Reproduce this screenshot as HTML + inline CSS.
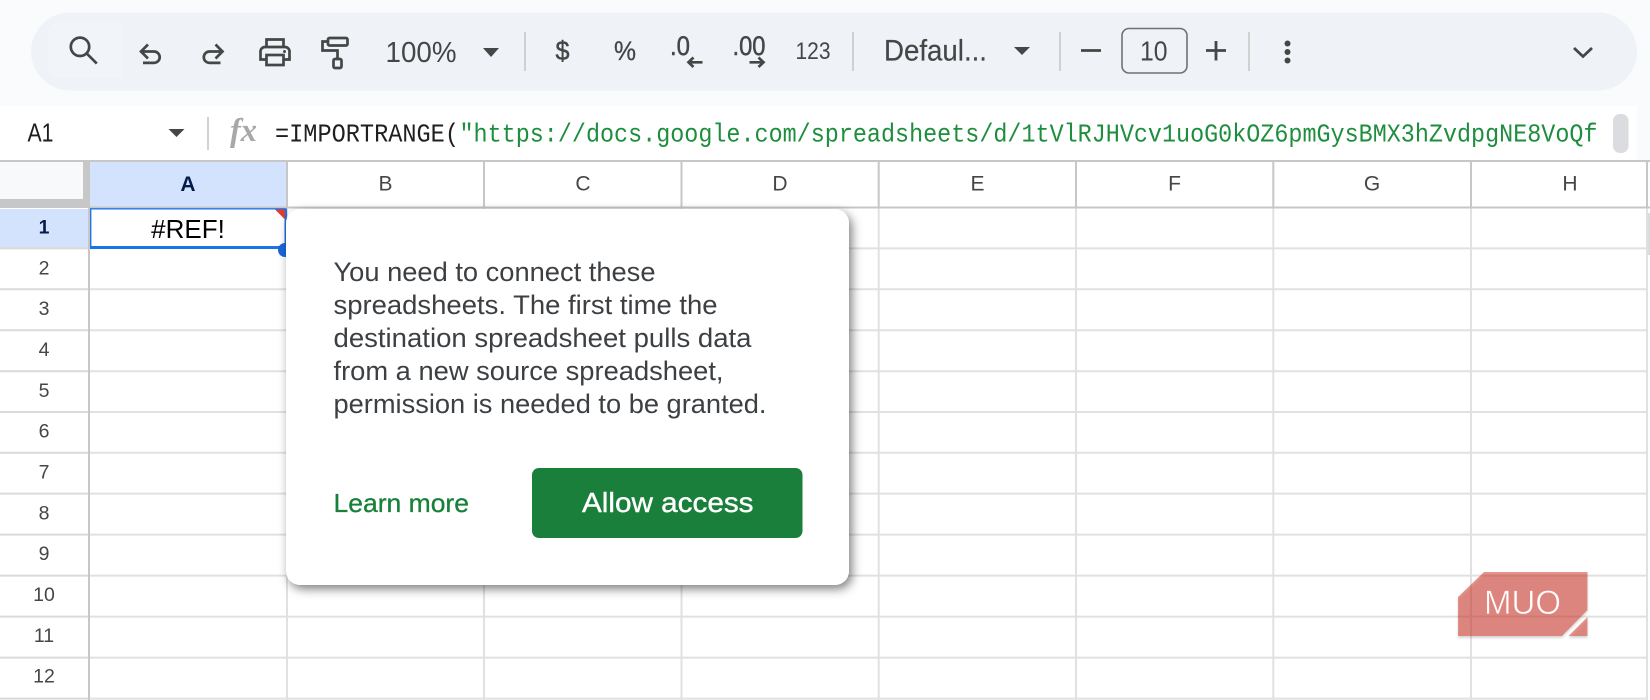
<!DOCTYPE html>
<html>
<head>
<meta charset="utf-8">
<title>Sheets</title>
<style>
html,body{margin:0;padding:0;background:#fff;width:1650px;height:700px;overflow:hidden}
svg{display:block}
text{font-family:"Liberation Sans",Arial,sans-serif}
.t{fill:#444746}
.i{fill:none;stroke:#444746;stroke-width:2.7}
.col{font-size:21px;fill:#444746;text-anchor:middle}
.row{font-size:19.5px;fill:#444746;text-anchor:middle}
.sep{stroke:#c7c7c7;stroke-width:1.6}
.g{stroke:#e1e1e1;stroke-width:2}
.h{stroke:#c7c7c7;stroke-width:2}
</style>
</head>
<body>
<svg width="1650" height="700" viewBox="0 0 1650 700" xmlns="http://www.w3.org/2000/svg">
<defs>
<filter id="sh" x="-10%" y="-10%" width="125%" height="125%"><feDropShadow dx="3" dy="4" stdDeviation="5" flood-color="#000" flood-opacity="0.5"/></filter>
<filter id="ls" x="-5%" y="-5%" width="110%" height="115%"><feDropShadow dx="0" dy="2" stdDeviation="1" flood-color="#000" flood-opacity="0.3"/></filter>
</defs>

<!-- backgrounds -->
<rect width="1650" height="160" fill="#f9fbfd"/>
<rect x="31" y="12.5" width="1606" height="78" rx="39" fill="#eff3f8"/>
<path d="M121.5 23 H56 a8 8 0 0 0 -8 8 V70 a8 8 0 0 0 8 8 H121.5 Z" fill="#f1f4f9"/>
<rect x="0" y="106" width="1637" height="55" fill="#fff"/>

<!-- toolbar icons -->
<circle cx="80" cy="46.8" r="9.2" class="i"/>
<path d="M86.8 53.6 L96.8 63.6" class="i"/>
<path d="M148 44.5 L141 51.5 L148 58.5 M141 51.5 H154 a5.7 5.7 0 0 1 0 11.4 H143" class="i"/>
<path d="M215.5 44.5 L222.5 51.5 L215.5 58.5 M222.5 51.5 H209.5 a5.7 5.7 0 0 0 0 11.4 H220.5" class="i"/>
<path d="M266.5 59.5 H260.5 V51.5 a4.5 4.5 0 0 1 4.5 -4.5 H285 a4.5 4.5 0 0 1 4.5 4.5 V59.5 H283.5" class="i"/>
<path d="M266.5 47 V39.5 H283.5 V47" class="i"/>
<rect x="266.5" y="55" width="17" height="10" class="i"/>
<circle cx="284.5" cy="51.5" r="1.5" fill="#444746"/>
<rect x="328" y="38" width="19.5" height="7.5" rx="1.5" class="i"/>
<path d="M328 41.5 H322.5 V50.5 H337.5 V59" class="i"/>
<rect x="333.5" y="59" width="8" height="9" rx="1.5" class="i"/>
<text x="385.5" y="62" font-size="29" class="t" textLength="71" lengthAdjust="spacingAndGlyphs">100%</text>
<path d="M483 48 H499 L491 57 Z" fill="#444746"/>
<line x1="525" y1="32" x2="525" y2="71" class="sep"/>
<text x="555.5" y="60" font-size="27" class="t" stroke="#444746" stroke-width=".5" textLength="14" lengthAdjust="spacingAndGlyphs">$</text>
<text x="614" y="60" font-size="27" class="t" stroke="#444746" stroke-width=".3" textLength="22" lengthAdjust="spacingAndGlyphs">%</text>
<text x="670" y="55" font-size="27" class="t" stroke="#444746" stroke-width=".5" textLength="20" lengthAdjust="spacingAndGlyphs">.0</text>
<path d="M702.5 62.3 H689 M693.5 57.5 L688.5 62.3 L693.5 67" class="i"/>
<text x="732.5" y="55" font-size="27" class="t" stroke="#444746" stroke-width=".5" textLength="33" lengthAdjust="spacingAndGlyphs">.00</text>
<path d="M749.5 62.3 H763 M758.5 57.5 L763.5 62.3 L758.5 67" class="i"/>
<text x="795.5" y="59" font-size="24.5" class="t" textLength="35" lengthAdjust="spacingAndGlyphs">123</text>
<line x1="853" y1="32" x2="853" y2="71" class="sep"/>
<text x="884" y="60.5" font-size="30" class="t" stroke="#444746" stroke-width=".2" textLength="103" lengthAdjust="spacingAndGlyphs">Defaul...</text>
<path d="M1014 47 H1030 L1022 55 Z" fill="#444746"/>
<line x1="1060" y1="32" x2="1060" y2="71" class="sep"/>
<line x1="1081" y1="50.5" x2="1101" y2="50.5" stroke="#444746" stroke-width="2.8"/>
<rect x="1122" y="28.5" width="65" height="44.5" rx="7" fill="none" stroke="#6f7271" stroke-width="1.6"/>
<text x="1140" y="60.5" font-size="28" class="t" textLength="27.5" lengthAdjust="spacingAndGlyphs">10</text>
<path d="M1206 50.5 H1226 M1216 41 V60.5" fill="none" stroke="#444746" stroke-width="2.8"/>
<line x1="1249" y1="32" x2="1249" y2="71" class="sep"/>
<circle cx="1287.5" cy="43.5" r="3" fill="#444746"/>
<circle cx="1287.5" cy="52" r="3" fill="#444746"/>
<circle cx="1287.5" cy="60.5" r="3" fill="#444746"/>
<path d="M1574 48 L1583 56.5 L1592 48" fill="none" stroke="#444746" stroke-width="2.8"/>

<!-- formula bar -->
<text x="27.5" y="141.5" font-size="26" fill="#1f1f1f" textLength="26" lengthAdjust="spacingAndGlyphs">A1</text>
<path d="M168.5 129 H184.5 L176.5 137 Z" fill="#444746"/>
<line x1="208" y1="117" x2="208" y2="150" class="sep"/>
<text x="230" y="141" style="font-family:'Liberation Serif',serif" font-size="33" font-style="italic" font-weight="700" fill="#a8a8a8" textLength="27" lengthAdjust="spacingAndGlyphs">fx</text>
<text x="275" y="141.5" style="font-family:'Liberation Mono',monospace" font-size="26" fill="#1f1f1f" textLength="184" lengthAdjust="spacingAndGlyphs">=IMPORTRANGE(</text>
<text x="459.5" y="141.5" style="font-family:'Liberation Mono',monospace" font-size="26" fill="#1e8e3e" textLength="1138" lengthAdjust="spacingAndGlyphs">"https://docs.google.com/spreadsheets/d/1tVlRJHVcv1uoG0kOZ6pmGysBMX3hZvdpgNE8VoQf</text>
<rect x="1613" y="114" width="15.5" height="39" rx="7" fill="#dadce0"/>

<!-- grid -->
<rect x="90" y="162" width="197" height="45" fill="#d3e3fd"/>
<rect x="0" y="209" width="88" height="38.5" fill="#d3e3fd"/>
<rect x="0" y="162" width="83" height="37" fill="#f8f9fa"/>
<g class="g">
<line x1="90" y1="289.3" x2="1648" y2="289.3"/><line x1="90" y1="330.3" x2="1648" y2="330.3"/>
<line x1="90" y1="371.2" x2="1648" y2="371.2"/><line x1="90" y1="412" x2="1648" y2="412"/>
<line x1="90" y1="452.8" x2="1648" y2="452.8"/><line x1="90" y1="493.6" x2="1648" y2="493.6"/>
<line x1="90" y1="534.6" x2="1648" y2="534.6"/><line x1="90" y1="575.6" x2="1648" y2="575.6"/>
<line x1="90" y1="616.6" x2="1648" y2="616.6"/><line x1="90" y1="657.6" x2="1648" y2="657.6"/>
<line x1="90" y1="698.6" x2="1648" y2="698.6"/><line x1="287" y1="248.4" x2="1648" y2="248.4"/>
<line x1="287" y1="208" x2="287" y2="700"/><line x1="484" y1="208" x2="484" y2="700"/>
<line x1="681.5" y1="208" x2="681.5" y2="700"/><line x1="878.7" y1="208" x2="878.7" y2="700"/>
<line x1="1076" y1="208" x2="1076" y2="700"/><line x1="1273.3" y1="208" x2="1273.3" y2="700"/>
<line x1="1471" y1="208" x2="1471" y2="700"/><line x1="1647" y1="208" x2="1647" y2="700"/>
</g>
<g stroke="#dadada" stroke-width="2">
<line x1="0" y1="248.4" x2="88" y2="248.4"/><line x1="0" y1="289.3" x2="88" y2="289.3"/>
<line x1="0" y1="330.3" x2="88" y2="330.3"/><line x1="0" y1="371.2" x2="88" y2="371.2"/>
<line x1="0" y1="412" x2="88" y2="412"/><line x1="0" y1="452.8" x2="88" y2="452.8"/>
<line x1="0" y1="493.6" x2="88" y2="493.6"/><line x1="0" y1="534.6" x2="88" y2="534.6"/>
<line x1="0" y1="575.6" x2="88" y2="575.6"/><line x1="0" y1="616.6" x2="88" y2="616.6"/>
<line x1="0" y1="657.6" x2="88" y2="657.6"/><line x1="0" y1="698.6" x2="88" y2="698.6"/>
</g>
<g class="h">
<line x1="0" y1="161" x2="1650" y2="161"/>
<line x1="90" y1="207.5" x2="1650" y2="207.5"/>
<line x1="287" y1="162" x2="287" y2="207"/><line x1="484" y1="162" x2="484" y2="207"/>
<line x1="681.5" y1="162" x2="681.5" y2="207"/><line x1="878.7" y1="162" x2="878.7" y2="207"/>
<line x1="1076" y1="162" x2="1076" y2="207"/><line x1="1273.3" y1="162" x2="1273.3" y2="207"/>
<line x1="1471" y1="162" x2="1471" y2="207"/><line x1="1647" y1="162" x2="1647" y2="207"/>
<line x1="89" y1="208" x2="89" y2="700"/>
</g>
<rect x="83" y="162" width="7" height="46" fill="#c7c7c7"/>
<rect x="0" y="199" width="90" height="9" fill="#c7c7c7"/>
<rect x="1647.5" y="213" width="2.5" height="42" fill="#dadce0"/>

<text x="188" y="191" class="col" font-weight="700" style="fill:#041e49">A</text>
<text x="385.5" y="190.5" class="col">B</text><text x="583" y="190.5" class="col">C</text>
<text x="780" y="190.5" class="col">D</text><text x="977.5" y="190.5" class="col">E</text>
<text x="1174.5" y="190.5" class="col">F</text><text x="1372" y="190.5" class="col">G</text>
<text x="1570" y="190.5" class="col">H</text>

<text x="44" y="233.5" class="row" font-weight="700" style="fill:#041e49">1</text>
<text x="44" y="274.3" class="row">2</text><text x="44" y="315.2" class="row">3</text>
<text x="44" y="356" class="row">4</text><text x="44" y="396.8" class="row">5</text>
<text x="44" y="437.6" class="row">6</text><text x="44" y="478.5" class="row">7</text>
<text x="44" y="519.3" class="row">8</text><text x="44" y="560.1" class="row">9</text>
<text x="44" y="601" class="row">10</text><text x="44" y="641.8" class="row">11</text>
<text x="44" y="682.6" class="row">12</text>

<!-- selected cell -->
<rect x="90" y="208" width="197" height="40" fill="#fff"/>
<text x="188" y="238" font-size="26" fill="#000" text-anchor="middle">#REF!</text>
<path d="M90.7 248 V208.8 H286 V248" fill="none" stroke="#1a73e8" stroke-width="1.4"/>
<rect x="90" y="246" width="190" height="3" fill="#1a73e8"/>
<rect x="284.5" y="209" width="2.5" height="36" fill="#1a73e8"/>
<path d="M275 209.5 H285 V219.5 Z" fill="#e33b2e"/>
<circle cx="285" cy="250" r="7" fill="#1a66d8"/>

<!-- popup -->
<rect x="286" y="209" width="563" height="376" rx="14" fill="#fff" filter="url(#sh)"/>
<g font-size="27" fill="#3c4043">
<text x="333.5" y="281" textLength="322" lengthAdjust="spacingAndGlyphs">You need to connect these</text>
<text x="333.5" y="314" textLength="384" lengthAdjust="spacingAndGlyphs">spreadsheets. The first time the</text>
<text x="333.5" y="347" textLength="418" lengthAdjust="spacingAndGlyphs">destination spreadsheet pulls data</text>
<text x="333.5" y="380" textLength="390" lengthAdjust="spacingAndGlyphs">from a new source spreadsheet,</text>
<text x="333.5" y="413" textLength="433" lengthAdjust="spacingAndGlyphs">permission is needed to be granted.</text>
</g>
<text x="333.5" y="512" font-size="26" fill="#188038" stroke="#188038" stroke-width=".3" textLength="135.5" lengthAdjust="spacingAndGlyphs">Learn more</text>
<rect x="532" y="468" width="270.5" height="70" rx="7" fill="#1a7f3b"/>
<text x="582" y="512" font-size="28" fill="#fff" stroke="#fff" stroke-width=".4" textLength="171.5" lengthAdjust="spacingAndGlyphs">Allow access</text>

<!-- logo -->
<g filter="url(#ls)">
<path d="M1458 597 L1484 572 H1587.5 V610 L1562 636 H1458 Z" fill="#d0362a" fill-opacity=".52"/>
<path d="M1587.5 617 V636 H1568.5 Z" fill="#d0362a" fill-opacity=".52"/>
</g>
<text x="1484" y="614" font-size="34.5" fill="#fff" stroke="#e3867f" stroke-width=".7" textLength="77" lengthAdjust="spacingAndGlyphs">MUO</text>
</svg>
</body>
</html>
